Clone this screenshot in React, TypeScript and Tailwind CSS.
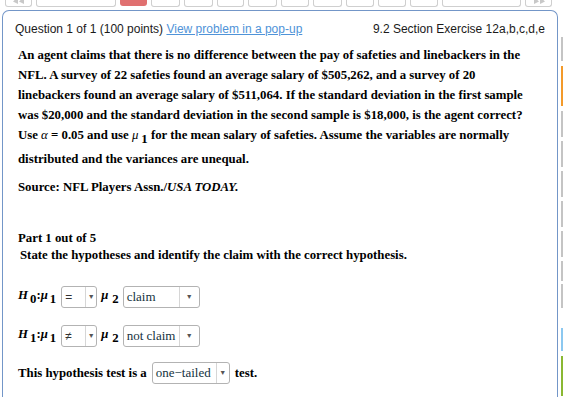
const serif = "font-['Liberation_Serif','Times_New_Roman',serif]"
const sans = "font-['Liberation_Sans',Arial,sans-serif]"

const TAB_WIDTHS = [27, 80, 27, 29, 29, 27, 29, 28, 29, 28, 28, 28, 79, 27]

function ArrowGlyph({ flip }: { flip?: boolean }) {
  return (
    <svg width="14" height="4" viewBox="0 0 14 4" className={flip ? 'mx-auto -scale-x-100' : 'mx-auto'}>
      <path d="M6 -3 L1 1.5 L6 4 Z M12 -3 L7 1.5 L12 4 Z" fill="#c8c8c8" />
    </svg>
  )
}

function TopTabs() {
  return (
    <div className="flex h-[7px] gap-[4px] pl-[5px]">
      {TAB_WIDTHS.map((w, i) => (
        <div
          key={i}
          className={
            i === 2
              ? 'h-[6px] rounded-b-[3px] bg-[#e07070]'
              : 'h-[7px] rounded-b-[3px] border border-t-0 border-[#cfcfcf] bg-white'
          }
          style={{ width: `${w}px` }}
        >
          {i === 0 && <ArrowGlyph />}
          {i === TAB_WIDTHS.length - 1 && <ArrowGlyph flip />}
        </div>
      ))}
    </div>
  )
}

const STRIP = [
  { h: 24, c: 'bg-[#c4c4c4]', mt: 27 },
  { h: 40, c: 'bg-[#f39a2a]', mt: 5 },
  { h: 26, c: 'bg-[#c4c4c4]', mt: 5 },
  { h: 26, c: 'bg-[#c4c4c4]', mt: 4 },
  { h: 26, c: 'bg-[#c4c4c4]', mt: 4 },
  { h: 26, c: 'bg-[#c4c4c4]', mt: 4 },
  { h: 26, c: 'bg-[#c4c4c4]', mt: 4 },
  { h: 20, c: 'bg-[#c4c4c4]', mt: 4 },
  { h: 24, c: 'bg-[#c4c4c4]', mt: 3 },
  { h: 23, c: 'bg-[#8cc8f0]', mt: 20 },
  { h: 40, c: 'bg-[#8ab832]', mt: 5 },
]

function SideStrip() {
  return (
    <div className="flex w-[5px] flex-col pl-[3px]">
      {STRIP.map((s, i) => (
        <div key={i} className={`w-[2px] ${s.c}`} style={{ height: `${s.h}px`, marginTop: `${s.mt}px` }} />
      ))}
    </div>
  )
}

interface SelectProps {
  value: string
  width: number
  arrowWidth: number
  symbol?: boolean
}

function Select({ value, width, arrowWidth, symbol }: SelectProps) {
  return (
    <span
      className="inline-flex h-[22px] shrink-0 items-stretch rounded-[3px] border border-[#b3b3b3] bg-white align-middle"
      style={{ width: `${width}px` }}
    >
      <span
        className={`flex flex-1 items-center pl-[3px] font-normal ${
          symbol ? `${sans} text-[12px] text-[#333]` : `${serif} text-[13px] text-[#14323e]`
        }`}
      >
        {value}
      </span>
      <span
        className="flex items-center justify-center border-l border-[#d6d6d6] text-[7px] text-[#555]"
        style={{ width: `${arrowWidth}px` }}
      >
        ▼
      </span>
    </span>
  )
}

function Sub({ children, gap }: { children: string; gap: string }) {
  return <span className={`not-italic align-[-4px] ${gap}`}>{children}</span>
}

function HypRow({ idx, rel, claim }: { idx: string; rel: string; claim: string }) {
  return (
    <div className="flex items-center">
      <span className="italic">
        H<Sub gap="ml-[2px]">{idx}</Sub>
        <span className="not-italic">:</span>μ<Sub gap="ml-[2px]">1</Sub>
      </span>
      <span className="ml-[5px]">
        <Select value={rel} width={36} arrowWidth={11} symbol />
      </span>
      <span className="ml-[4px] italic">
        μ<Sub gap="ml-[4px]">2</Sub>
      </span>
      <span className="ml-[4px]">
        <Select value={claim} width={77} arrowWidth={20} />
      </span>
    </div>
  )
}

export default function App() {
  return (
    <div className="flex h-[397px] w-[563px] flex-col overflow-hidden bg-white">
      <TopTabs />
      <div className="flex flex-1 pt-[3px]">
        <div className="ml-[2px] w-[556px] rounded-t-[7px] border border-b-0 border-[#7396c8]">
          <div className={`${sans} flex justify-between pl-[12px] pr-[12px] pt-[10px] text-[12px] leading-[16px] text-[#1a1a1a]`}>
            <span>
              Question 1 of 1 (100 points){' '}
              <span className="text-[#4f93d8] underline">View problem in a pop-up</span>
            </span>
            <span>9.2 Section Exercise 12a,b,c,d,e</span>
          </div>
          <div className={`${serif} pl-[15px] pt-[8px] text-[12.8px] font-bold leading-[20px] text-black`}>
            <p className="whitespace-nowrap">
              An agent claims that there is no difference between the pay of safeties and linebackers in the
              <br />
              NFL. A survey of 22 safeties found an average salary of $505,262, and a survey of 20
              <br />
              linebackers found an average salary of $511,064. If the standard deviation in the first sample
              <br />
              was $20,000 and the standard deviation in the second sample is $18,000, is the agent correct?
              <br />
              Use <i className="font-normal">α</i> = 0.05 and use <i className="font-normal">μ</i>
              <Sub gap="ml-[3px]">1</Sub> for the mean salary of safeties. Assume the variables are normally
              <br />
              distributed and the variances are unequal.
            </p>
            <p className="mt-[8px]">
              Source: NFL Players Assn./<i>USA TODAY.</i>
            </p>
            <p className="mt-[33px] leading-[17px]">Part 1 out of 5</p>
            <p className="pl-[2px] leading-[17px]">State the hypotheses and identify the claim with the correct hypothesis.</p>
            <div className="mt-[21px]">
              <HypRow idx="0" rel="=" claim="claim" />
            </div>
            <div className="mt-[15px]">
              <HypRow idx="1" rel="≠" claim="not claim" />
            </div>
            <div className="mt-[14px] flex items-center gap-[5px]">
              <span>This hypothesis test is a</span>
              <Select value="one−tailed" width={78} arrowWidth={13} />
              <span>test.</span>
            </div>
          </div>
        </div>
        <SideStrip />
      </div>
    </div>
  )
}
